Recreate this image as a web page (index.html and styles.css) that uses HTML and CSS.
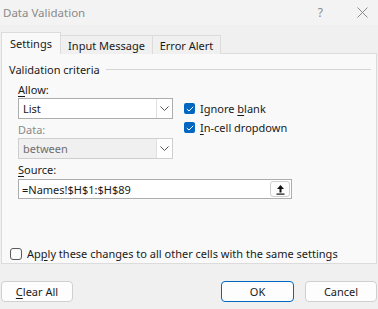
FILE: index.html
```html
<!DOCTYPE html>
<html>
<head>
<meta charset="utf-8">
<link rel="stylesheet" href="styles.css">
</head>
<body>
<div class="titlebar">
  <span class="title">Data Validation</span>
  <span class="help">?</span>
  <span class="close"><svg width="11" height="11" viewBox="0 0 11 11"><path d="M0.5 0.5 L10.5 10.5 M10.5 0.5 L0.5 10.5" stroke="#8a8a8a" stroke-width="1" fill="none"/></svg></span>
</div>
<div class="tabs">
  <div class="tab active">Settings</div>
  <div class="tab t2">Input Message</div>
  <div class="tab t3">Error Alert</div>
</div>
<div class="panel">
  <div class="legend"><span>Validation criteria</span><span class="rule"></span></div>
  <div class="criteria">
    <div class="leftcol">
      <div class="label"><u>A</u>llow:</div>
      <div class="select">
        <span class="val">List</span>
        <span class="drop"><svg width="9" height="5" viewBox="0 0 9 5"><path d="M0.5 0.5 L4.5 4.5 L8.5 0.5" stroke="#555" stroke-width="1" fill="none"/></svg></span>
      </div>
      <div class="label dim">Data:</div>
      <div class="select disabled">
        <span class="val">between</span>
        <span class="drop"><svg width="9" height="5" viewBox="0 0 9 5"><path d="M0.5 0.5 L4.5 4.5 L8.5 0.5" stroke="#555" stroke-width="1" fill="none"/></svg></span>
      </div>
    </div>
    <div class="rightcol">
      <div class="check"><span class="box on"><svg width="8" height="6" viewBox="0 0 8 6"><path d="M0.8 3 L3 5 L7.2 0.8" stroke="#fff" stroke-width="1" fill="none"/></svg></span><span>Ignore <u>b</u>lank</span></div>
      <div class="check"><span class="box on"><svg width="8" height="6" viewBox="0 0 8 6"><path d="M0.8 3 L3 5 L7.2 0.8" stroke="#fff" stroke-width="1" fill="none"/></svg></span><span><u>I</u>n-cell dropdown</span></div>
    </div>
  </div>
  <div class="source">
    <div class="label"><u>S</u>ource:</div>
    <div class="input">
      <span class="val">=Names!$H$1:$H$89</span>
      <span class="pick"><svg width="9" height="11" viewBox="0 0 9 11"><path d="M4.5 1 L8 5 L5.5 5 L5.5 8.5 L3.5 8.5 L3.5 5 L1 5 Z" fill="#111"/><rect x="0.5" y="9.5" width="8" height="1.2" fill="#111"/></svg></span>
    </div>
  </div>
  <div class="apply"><span class="box off"></span><span>Ap<u>p</u>ly these changes to all other cells with the same settings</span></div>
</div>
<div class="footer">
  <button class="btn"><u>C</u>lear All</button>
  <span class="spacer"></span>
  <button class="btn primary">OK</button>
  <button class="btn">Cancel</button>
</div>
</body>
</html>
```
FILE: styles.css
```css
html, body {
  margin: 0;
  padding: 0;
}
body {
  width: 378px;
  height: 309px;
  background: #f0f0f0;
  font-family: "Noto Sans", "Open Sans", sans-serif;
  font-size: 11px;
  color: #1a1a1a;
  overflow: hidden;
}
u { text-decoration: underline; text-underline-offset: 2px; }
.titlebar {
  height: 25px;
  background: #f3f3f3;
  display: flex;
  align-items: center;
  padding-left: 3px;
}
.title {
  color: #8a8a8a;
  font-size: 11.5px;
  flex: 1;
}
.help {
  color: #8a8a8a;
  font-size: 12px;
  margin-right: 34px;
}
.close {
  display: flex;
  margin-right: 10px;
}
.tabs {
  display: flex;
  align-items: flex-end;
  margin-top: 7px;
  padding-left: 1px;
  position: relative;
  z-index: 1;
  height: 22px;
}
.tab {
  height: 19px;
  line-height: 19px;
  text-align: center;
  border: 1px solid #dcdcdc;
  border-bottom: none;
  border-left: none;
  background: #f0f0f0;
  box-sizing: border-box;
}
.tab.active {
  height: 22px;
  line-height: 22px;
  background: #f9f9f9;
  border-left: 1px solid #dcdcdc;
  width: 60px;
}
.tab.t2 { width: 92px; }
.tab.t3 { width: 68px; }
.panel {
  margin: -1px 1px 0 1px;
  height: 211px;
  box-sizing: border-box;
  border: 1px solid #dcdcdc;
  background: #f9f9f9;
  padding: 8px 0 0 7px;
  display: flex;
  flex-direction: column;
}
.legend {
  display: flex;
  align-items: center;
  height: 14px;
}
.rule {
  flex: 1;
  height: 1px;
  background: #d5d5d5;
  margin: 0 5px 0 6px;
}
.criteria {
  display: flex;
  margin-left: 9px;
  margin-top: 6px;
}
.leftcol {
  width: 155px;
}
.label {
  height: 16px;
  line-height: 16px;
}
.dim { color: #8a8a8a; margin-top: 3px; }
.select {
  height: 21px;
  box-sizing: border-box;
  border: 1px solid #adadad;
  background: #fff;
  display: flex;
  align-items: center;
}
.select .val {
  flex: 1;
  padding-left: 4px;
}
.select.disabled {
  background: #f0f0f0;
  border-color: #cfcfcf;
  color: #6e6e6e;
}
.drop {
  width: 15px;
  height: 19px;
  border-left: 1px solid #e0e0e0;
  background: #fff;
  display: flex;
  align-items: center;
  justify-content: center;
}
.rightcol {
  margin-left: 11px;
  margin-top: 17px;
}
.check {
  display: flex;
  align-items: center;
  height: 19px;
}
.box {
  width: 11px;
  height: 11px;
  border-radius: 2px;
  margin-right: 5px;
  display: flex;
  align-items: center;
  justify-content: center;
  box-sizing: border-box;
  flex: none;
}
.box.on { background: #0067c0; }
.box.off {
  width: 12px;
  height: 12px;
  border: 1px solid #5a5a5a;
  border-radius: 3px;
  background: #fbfbfb;
}
.source {
  margin-left: 9px;
  margin-top: 3px;
}
.input {
  width: 274px;
  height: 20px;
  box-sizing: border-box;
  border: 1px solid #adadad;
  background: #fff;
  display: flex;
  align-items: center;
  margin-top: 1px;
}
.input .val {
  flex: 1;
  padding-left: 3px;
}
.pick {
  width: 20px;
  height: 16px;
  margin-right: 1px;
  border: 1px solid #cfcfcf;
  border-radius: 3px;
  background: #fdfdfd;
  display: flex;
  align-items: center;
  justify-content: center;
  box-sizing: border-box;
}
.apply {
  display: flex;
  align-items: center;
  margin-top: 47px;
  margin-left: 1px;
}
.footer {
  display: flex;
  margin-top: 17px;
  padding: 0 1px;
}
.spacer { flex: 1; }
.btn {
  width: 72px;
  height: 21px;
  box-sizing: border-box;
  border: 1px solid #d0d0d0;
  border-radius: 4px;
  background: #fdfdfd;
  font-family: inherit;
  font-size: 11px;
  color: #1a1a1a;
  padding: 0;
}
.btn.primary {
  border-color: #0067c0;
  margin-right: 11px;
  width: 73px;
}
```
